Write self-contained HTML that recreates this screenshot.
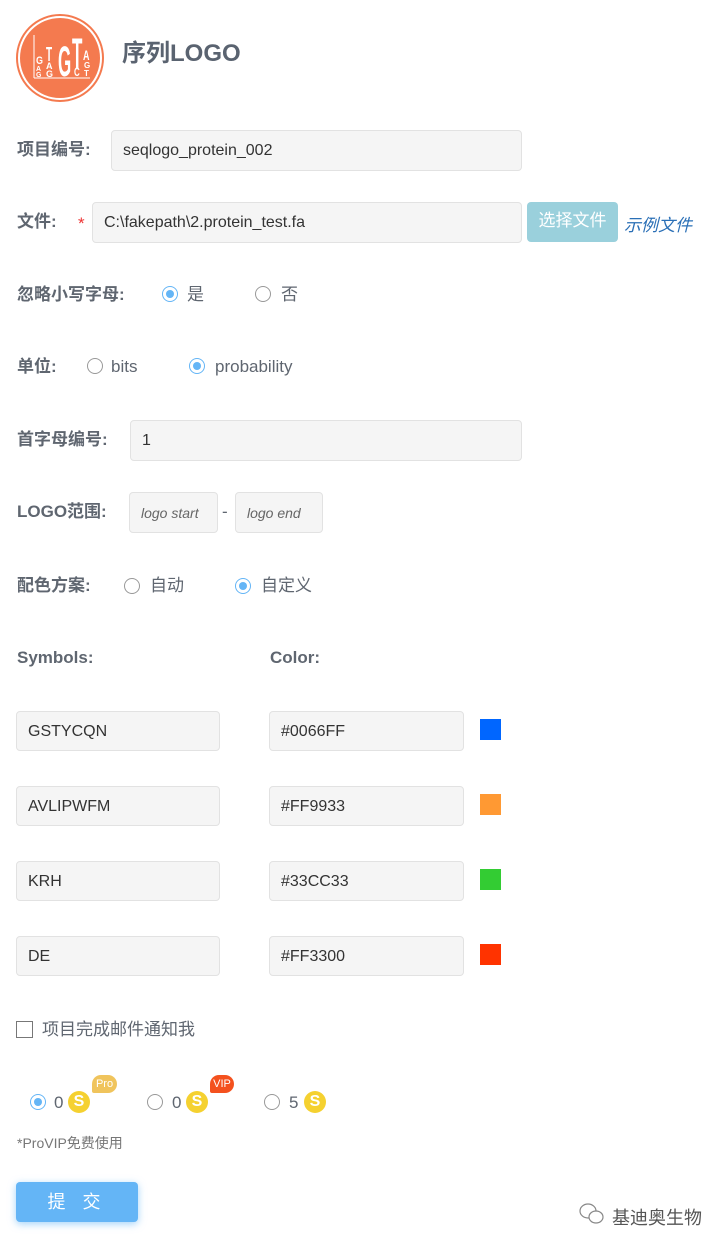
<!DOCTYPE html>
<html><head><meta charset="utf-8"><style>
body{margin:0;width:724px;height:1248px;background:#fff;font-family:"Liberation Sans","Noto Sans CJK SC",sans-serif;position:relative;overflow:hidden;color:#5f6670}
.a{position:absolute}
.lbl{position:absolute;font-size:17px;font-weight:bold;color:#5f6670;line-height:20px}
.inp{position:absolute;background:#f5f5f5;border:1px solid #e2e2e2;border-radius:4px;box-sizing:border-box;font-size:16px;color:#333;line-height:40px;padding-left:11px}
.r{position:absolute;width:16px;height:16px;border:1px solid #999;border-radius:50%;box-sizing:border-box;background:#fff}
.r.on{border-color:#64b5f6}
.r.on:after{content:"";position:absolute;left:3px;top:3px;width:8px;height:8px;border-radius:50%;background:#64b5f6}
.t{position:absolute;font-size:17px;color:#5f6670;line-height:20px}
.coin{position:absolute;width:22px;height:22px;border-radius:50%;background:#f5d130;color:#fff;font-weight:bold;font-size:16px;text-align:center;line-height:22px}
.sw{position:absolute;width:21px;height:21px}
</style></head><body>
<div class="a" style="left:16px;top:14px;width:88px;height:88px;border-radius:50%;border:2px solid #f47a4f;box-sizing:border-box;background:#fff"></div>
<div class="a" style="left:20px;top:18px;width:80px;height:80px;border-radius:50%;background:#f47a4f"></div>
<svg class="a" style="left:20px;top:18px" width="80" height="80"><g fill="#fff" font-family="Liberation Sans" font-weight="bold"><line x1="14" y1="17" x2="14" y2="60" stroke="#fff"/><line x1="14" y1="60" x2="70" y2="60" stroke="#fff"/>
<text transform="translate(16,46) scale(1,1.2)" font-size="9">G</text><text transform="translate(16,53) scale(1,1)" font-size="7">A</text><text transform="translate(16,59) scale(1,1)" font-size="7">G</text>
<text transform="translate(26,43) scale(1,2)" font-size="10">T</text><text transform="translate(26,51) scale(1,1)" font-size="9">A</text><text transform="translate(26,59) scale(1,1)" font-size="9">G</text>
<text transform="translate(38,58) scale(1,2.5)" font-size="17">G</text>
<text transform="translate(52,51) scale(1,2.6)" font-size="17">T</text>
<text transform="translate(54,58) scale(1,1.5)" font-size="8">C</text>
<text transform="translate(63,42) scale(1,1.5)" font-size="9">A</text>
<text transform="translate(64,50) scale(1,1)" font-size="8">G</text><text transform="translate(64,58) scale(1,1)" font-size="8">T</text></g></svg>
<div class="a" style="left:122px;top:38px;font-size:24px;font-weight:bold;color:#5a6370;line-height:32px">序列LOGO</div>

<div class="lbl" style="left:17px;top:140px">项目编号:</div>
<div class="inp" style="left:111px;top:130px;width:411px;height:41px">seqlogo_protein_002</div>

<div class="lbl" style="left:17px;top:212px">文件:</div>
<div class="a" style="left:78px;top:214px;color:#e33;font-size:17px">*</div>
<div class="inp" style="left:92px;top:202px;width:430px;height:41px">C:\fakepath\2.protein_test.fa</div>
<div class="a" style="left:527px;top:202px;width:91px;height:40px;background:#9ad0dc;border-radius:4px;color:#fff;font-size:17px;text-align:center;line-height:38px">选择文件</div>
<div class="a" style="left:624px;top:211px;font-size:17px;color:#2a6fb6;font-style:italic">示例文件</div>

<div class="lbl" style="left:17px;top:285px">忽略小写字母:</div>
<div class="r on" style="left:162px;top:286px"></div><div class="t" style="left:187px;top:285px">是</div>
<div class="r" style="left:255px;top:286px"></div><div class="t" style="left:281px;top:285px">否</div>

<div class="lbl" style="left:17px;top:357px">单位:</div>
<div class="r" style="left:87px;top:358px"></div><div class="t" style="left:111px;top:357px">bits</div>
<div class="r on" style="left:189px;top:358px"></div><div class="t" style="left:215px;top:357px">probability</div>

<div class="lbl" style="left:17px;top:430px">首字母编号:</div>
<div class="inp" style="left:130px;top:420px;width:392px;height:41px">1</div>

<div class="lbl" style="left:17px;top:502px">LOGO范围:</div>
<div class="inp" style="left:129px;top:492px;width:89px;height:41px;font-size:14px;font-style:italic;color:#666">logo start</div>
<div class="t" style="left:222px;top:502px">-</div>
<div class="inp" style="left:235px;top:492px;width:88px;height:41px;font-size:14px;font-style:italic;color:#666">logo end</div>

<div class="lbl" style="left:17px;top:576px">配色方案:</div>
<div class="r" style="left:124px;top:578px"></div><div class="t" style="left:150px;top:576px">自动</div>
<div class="r on" style="left:235px;top:578px"></div><div class="t" style="left:261px;top:576px">自定义</div>

<div class="lbl" style="left:17px;top:648px">Symbols:</div>
<div class="lbl" style="left:270px;top:648px">Color:</div>

<div class="inp" style="left:16px;top:711px;width:204px;height:40px">GSTYCQN</div>
<div class="inp" style="left:269px;top:711px;width:195px;height:40px">#0066FF</div>
<div class="sw" style="left:480px;top:719px;background:#0066ff"></div>
<div class="inp" style="left:16px;top:786px;width:204px;height:40px">AVLIPWFM</div>
<div class="inp" style="left:269px;top:786px;width:195px;height:40px">#FF9933</div>
<div class="sw" style="left:480px;top:794px;background:#ff9933"></div>
<div class="inp" style="left:16px;top:861px;width:204px;height:40px">KRH</div>
<div class="inp" style="left:269px;top:861px;width:195px;height:40px">#33CC33</div>
<div class="sw" style="left:480px;top:869px;background:#33cc33"></div>
<div class="inp" style="left:16px;top:936px;width:204px;height:40px">DE</div>
<div class="inp" style="left:269px;top:936px;width:195px;height:40px">#FF3300</div>
<div class="sw" style="left:480px;top:944px;background:#ff3300"></div>

<div class="a" style="left:16px;top:1021px;width:17px;height:17px;border:1px solid #777;box-sizing:border-box"></div>
<div class="t" style="left:42px;top:1020px">项目完成邮件通知我</div>

<div class="r on" style="left:30px;top:1094px"></div><div class="t" style="left:54px;top:1093px">0</div><div class="coin" style="left:68px;top:1091px">S</div>
<div class="a" style="left:92px;top:1075px;width:25px;height:18px;border-radius:9px 9px 9px 2px;background:#f0c45c;color:#fff;font-size:11px;text-align:center;line-height:18px">Pro</div>
<div class="r" style="left:147px;top:1094px"></div><div class="t" style="left:172px;top:1093px">0</div><div class="coin" style="left:186px;top:1091px">S</div>
<div class="a" style="left:210px;top:1075px;width:24px;height:18px;border-radius:9px 9px 9px 2px;background:#f4511e;color:#fff;font-size:11px;text-align:center;line-height:18px">VIP</div>
<div class="r" style="left:264px;top:1094px"></div><div class="t" style="left:289px;top:1093px">5</div><div class="coin" style="left:304px;top:1091px">S</div>

<div class="a" style="left:17px;top:1133px;font-size:14px;color:#777">*ProVIP免费使用</div>
<div class="a" style="left:16px;top:1182px;width:122px;height:40px;background:#64b5f6;border-radius:4px;color:#fff;font-size:18px;text-align:center;line-height:40px;box-shadow:0 2px 8px rgba(100,181,246,.6);letter-spacing:6px">提 交</div>

<svg class="a" style="left:577px;top:1200px" width="30" height="30"><g fill="none" stroke="#888" stroke-width="1.2"><ellipse cx="11" cy="11" rx="8" ry="7"/><ellipse cx="19" cy="17" rx="7" ry="6" fill="#fff"/></g></svg>
<div class="a" style="left:612px;top:1204px;font-size:18px;color:#555">基迪奥生物</div>
</body></html>
